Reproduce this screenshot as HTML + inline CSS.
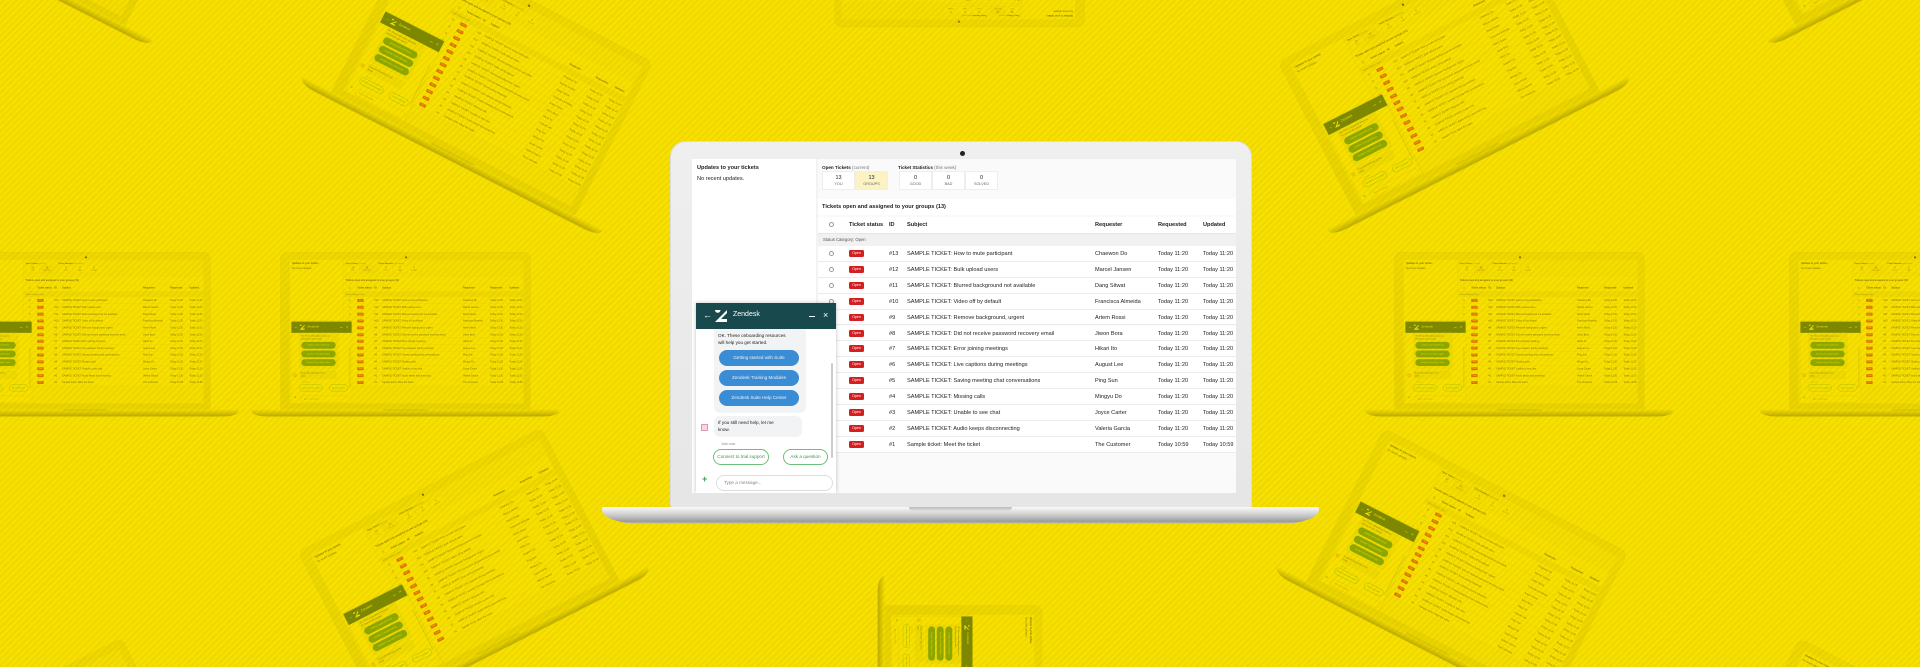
<!DOCTYPE html>
<html><head><meta charset="utf-8"><style>
*{margin:0;padding:0;box-sizing:border-box}
html,body{width:1920px;height:667px;overflow:hidden}
body{font-family:"Liberation Sans",sans-serif;position:relative;background:#f7e000}
#bg{position:absolute;left:0;top:0;width:1920px;height:667px;background:#fff;isolation:isolate;overflow:hidden}
#tint{position:absolute;inset:0;background:#f7e000;mix-blend-mode:multiply;z-index:50}
#fade{position:absolute;inset:0;background:rgba(247,224,0,0.45);z-index:51}
#stripes{position:absolute;inset:0;z-index:52;background:repeating-linear-gradient(-45deg,rgba(0,0,0,0) 0 3px,rgba(150,120,0,0.10) 3px 4.5px)}
.lap{position:absolute;width:717px;height:383px;transform-origin:0 0}
.lid{position:absolute;left:68px;top:0;width:582px;height:367px;background:linear-gradient(#efefef,#e6e6e6);border-radius:16px 16px 3px 3px;border:1px solid #dcdcdc}
.cam{position:absolute;left:289px;top:9px;width:5px;height:5px;border-radius:50%;background:#222}
.base{position:absolute;left:0;top:366px;width:717px;height:17px;border-radius:2px 2px 40px 40px/2px 2px 14px 14px;background:linear-gradient(#fafafa 0%,#d8d8d8 35%,#bdbdbd 60%,#9a9a9a 85%,#c9c9c9 100%)}
.notch{position:absolute;left:307px;top:0;width:103px;height:4px;background:linear-gradient(#bbb,#e0e0e0);border-radius:0 0 6px 6px}
.scr{position:absolute;left:21px;top:17px;width:544px;height:334px;background:#f3f3f3;overflow:hidden;font-size:5.6px;color:#222}
.t{position:absolute;white-space:nowrap}
.b{font-weight:bold}
.lp{position:absolute;left:0;top:0;width:124px;height:334px;background:#fff}
.rp{position:absolute;left:126px;top:0;width:418px;height:334px;background:#fafafa}
.box{position:absolute;top:12px;width:33px;height:19px;background:#fff;border:1px solid #eee;text-align:center;font-size:5.5px;line-height:7px;padding-top:3px}
.box i{display:block;font-style:normal;font-size:3.8px;color:#666;line-height:5px}
.row{position:absolute;left:126px;width:418px;height:15.9px;background:#fff;border-bottom:1px solid #ececec}
.row span{position:absolute;top:5px;white-space:nowrap}
.cb{position:absolute;left:11px;top:5px;width:5px;height:5px;border:0.7px solid #999;border-radius:50%}
.bad{position:absolute;left:31px;top:4px;width:15px;height:7px;background:#d31f1f;border-radius:1.5px;color:#fff;font-size:3.5px;line-height:7px;text-align:center}
.chat{position:absolute;left:4px;top:144px;width:140px;height:190px;background:#fff;box-shadow:0 0 4px rgba(0,0,0,.25);z-index:5}
.ch{position:absolute;left:0;top:0;width:140px;height:26px;background:#17494d;color:#fff}
.bub{position:absolute;background:#f2f3f5;border-radius:6px}
.btn{position:absolute;left:23px;width:80px;height:16px;background:#3a8cd4;border-radius:8px;color:#e8f2fb;font-size:4.6px;line-height:16px;text-align:center}
.ob{position:absolute;top:146px;height:16px;border:1px solid #6cc07a;border-radius:8px;color:#3a9a4d;font-size:4.6px;line-height:14px;text-align:center}
</style></head><body>
<div id="bg"></div>

<div class="lap" id="main" style="left:602px;top:141px;z-index:100">
 <div class="lid"><div class="cam"></div>
  <div class="scr">
   <div class="lp">
    <div class="t b" style="left:5px;top:6px">Updates to your tickets</div>
    <div class="t" style="left:5px;top:17px">No recent updates.</div>
   </div>
   <div class="rp"></div>
   <div class="t b" style="left:130px;top:6px;font-size:4.6px">Open Tickets <span style="font-weight:normal;color:#777">(current)</span></div>
   <div class="box" style="left:130px">13<i>YOU</i></div>
   <div class="box" style="left:163px;background:#fbf3c4">13<i>GROUPS</i></div>
   <div class="t b" style="left:206px;top:6px;font-size:4.6px">Ticket Statistics <span style="font-weight:normal;color:#777">(this week)</span></div>
   <div class="box" style="left:207px">0<i>GOOD</i></div>
   <div class="box" style="left:240px">0<i>BAD</i></div>
   <div class="box" style="left:273px">0<i>SOLVED</i></div>
   <div style="position:absolute;left:126px;top:40px;width:418px;height:16px;background:#fff"></div>
   <div class="t b" style="left:130px;top:45px">Tickets open and assigned to your groups (13)</div>
   <div style="position:absolute;left:126px;top:58px;width:418px;height:17px;background:#fff;border-bottom:1px solid #e5e5e5"></div>
   <div class="cb" style="left:137px;top:63px"></div>
   <div class="t b" style="left:157px;top:63px">Ticket status</div>
   <div class="t b" style="left:197px;top:63px">ID</div>
   <div class="t b" style="left:215px;top:63px">Subject</div>
   <div class="t b" style="left:403px;top:63px">Requester</div>
   <div class="t b" style="left:466px;top:63px">Requested</div>
   <div class="t b" style="left:511px;top:63px">Updated</div>
   <div style="position:absolute;left:126px;top:75px;width:418px;height:12px;background:#f1f1f1"></div>
   <div class="t" style="left:131px;top:78px;font-size:4.2px;color:#555">Status Category: Open</div>
   <div id="rows"></div>
   <div class="chat">
    <div class="ch">
     <div class="t" style="left:7px;top:7px;font-size:9px;line-height:10px">&#8592;</div>
     <svg style="position:absolute;left:19px;top:7px" width="12" height="12" viewBox="0 0 12 12"><path d="M0 0H12L0 12H12V9H6L12 3V0Z" fill="#fff"/><path d="M0 0h5.5a2.75 2.75 0 0 1-5.5 0z" fill="#fff"/></svg>
     <div class="t" style="left:37px;top:8px;font-size:7px">Zendesk</div>
     <div style="position:absolute;left:113px;top:13px;width:6px;height:1px;background:#fff"></div>
     <div class="t" style="left:127px;top:7px;font-size:9px;line-height:10px">&#215;</div>
    </div>
    <div class="bub" style="left:18px;top:26px;width:92px;height:84px;border-radius:0 0 6px 6px"></div>
    <div class="t" style="left:22px;top:29px;font-size:4.6px;line-height:7px">OK. These onboarding resources<br>will help you get started.</div>
    <div class="btn" style="top:47px">Getting started with Suite</div>
    <div class="btn" style="top:67px">Zendesk Training Modules</div>
    <div class="btn" style="top:87px">Zendesk Suite Help Center</div>
    <div class="bub" style="left:18px;top:113px;width:88px;height:21px"></div>
    <div class="t" style="left:22px;top:116px;font-size:4.6px;line-height:7px">If you still need help, let me<br>know.</div>
    <div style="position:absolute;left:5px;top:121px;width:7px;height:7px;background:#f2d6ee;border:1px solid #d9a"></div>
    <div class="t" style="left:25px;top:139px;font-size:3.6px;color:#888">Just now</div>
    <div class="ob" style="left:17px;width:56px">Connect to trial support</div>
    <div class="ob" style="left:87px;width:45px">Ask a question</div>
    <div class="t" style="left:6px;top:171px;font-size:9px;color:#3aa34a;font-weight:bold">+</div>
    <div style="position:absolute;left:20px;top:172px;width:117px;height:16px;border:1px solid #ddd;border-radius:8px"></div>
    <div class="t" style="left:28px;top:177px;font-size:4.6px;color:#888">Type a message...</div>
    <div style="position:absolute;left:135px;top:60px;width:2px;height:95px;background:#ccc;border-radius:1px"></div>
   </div>
  </div>
 </div>
 <div class="base"><div class="notch"></div></div>
</div>

<script>
var data=[["#13","SAMPLE TICKET: How to mute participant","Chaewon Do"],["#12","SAMPLE TICKET: Bulk upload users","Marcel Jansen"],["#11","SAMPLE TICKET: Blurred background not available","Dang Sitwat"],["#10","SAMPLE TICKET: Video off by default","Francisca Almeida"],["#9","SAMPLE TICKET: Remove background, urgent","Artem Rossi"],["#8","SAMPLE TICKET: Did not receive password recovery email","Jiwon Bora"],["#7","SAMPLE TICKET: Error joining meetings","Hikari Ito"],["#6","SAMPLE TICKET: Live captions during meetings","August Lee"],["#5","SAMPLE TICKET: Saving meeting chat conversations","Ping Sun"],["#4","SAMPLE TICKET: Missing calls","Mingyu Do"],["#3","SAMPLE TICKET: Unable to see chat","Joyce Carter"],["#2","SAMPLE TICKET: Audio keeps disconnecting","Valeria Garcia"],["#1","Sample ticket: Meet the ticket","The Customer"]];
var h="";
data.forEach(function(d,i){var tm=i==12?"10:59":"11:20";
h+='<div class="row" style="top:'+(87+i*15.9)+'px"><div class="cb"></div><div class="bad">Open</div><span style="left:71px">'+d[0]+'</span><span style="left:89px">'+d[1]+'</span><span style="left:277px">'+d[2]+'</span><span style="left:340px">Today '+tm+'</span><span style="left:385px">Today '+tm+'</span></div>';});
document.getElementById('rows').innerHTML=h;
var bg=document.getElementById('bg');
var m=document.getElementById('main');
var L=[[-69,252,0,.43,1],[251,252,0,.43,1],[1365,252,0,.43,1],[1760,252,0,.43,1],
[490,80,27,.47],[1440,80,-27,.47],[460,570,-27,.47],[1465,570,27,.47],
[960,-55,180,.43],[960,730,90,.43],[40,-110,27,.47],[1880,-110,-27,.47],[40,780,-27,.47],[1880,780,27,.47]];
L.forEach(function(p){var c=m.cloneNode(true);c.removeAttribute('id');c.style.zIndex=1;
 if(p[4]){c.style.left=p[0]+'px';c.style.top=p[1]+'px';c.style.transform='scale('+p[3]+')';}
 else{c.style.left=(p[0]-358)+'px';c.style.top=(p[1]-191)+'px';c.style.transformOrigin='358px 191px';c.style.transform='rotate('+p[2]+'deg) scale('+p[3]+')';}
 bg.appendChild(c);});
var t=document.createElement('div');t.id='tint';bg.appendChild(t);
var f=document.createElement('div');f.id='fade';bg.appendChild(f);
var s=document.createElement('div');s.id='stripes';bg.appendChild(s);
</script>
</body></html>
